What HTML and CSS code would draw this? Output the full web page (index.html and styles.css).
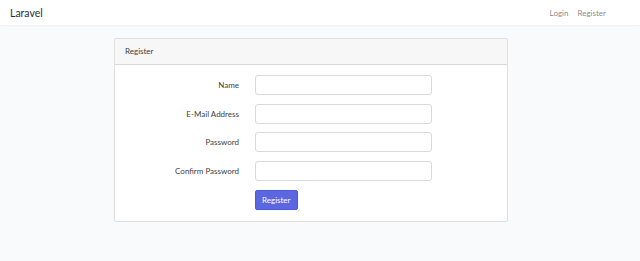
FILE: index.html
```html
<!DOCTYPE html>
<html>
<head>
    <meta charset="utf-8">
    <title>Register</title>
    <link rel="stylesheet" href="styles.css">
</head>
<body>
    <nav class="navbar">
        <a class="brand" href="#">Laravel</a>
        <div class="nav-links">
            <a href="#">Login</a>
            <a href="#">Register</a>
        </div>
    </nav>

    <main class="content">
        <div class="card">
            <div class="card-header">Register</div>
            <form class="card-body">
                <div class="form-row">
                    <label for="name">Name</label>
                    <input type="text" id="name">
                </div>
                <div class="form-row">
                    <label for="email">E-Mail Address</label>
                    <input type="email" id="email">
                </div>
                <div class="form-row">
                    <label for="password">Password</label>
                    <input type="password" id="password">
                </div>
                <div class="form-row">
                    <label for="password-confirm">Confirm Password</label>
                    <input type="password" id="password-confirm">
                </div>
                <div class="form-row">
                    <span></span>
                    <div class="actions"><button type="submit" class="btn">Register</button></div>
                </div>
            </form>
        </div>
    </main>
</body>
</html>
```

FILE: styles.css
```css
body {
    margin: 0;
    background: #f8fafc;
    font-family: Lato, "Noto Sans", sans-serif;
    color: #3a3f44;
}

.navbar {
    display: flex;
    align-items: center;
    justify-content: space-between;
    height: 25px;
    padding: 0 34px 0 10px;
    background: #fff;
    box-shadow: 0 1px 2px rgba(0, 0, 0, 0.05);
}

.brand {
    font-size: 10.5px;
    color: #2a2e33;
    text-decoration: none;
}

.nav-links {
    display: flex;
    gap: 9px;
}

.nav-links a {
    font-size: 8px;
    color: rgba(0, 0, 0, 0.5);
    text-decoration: none;
}

.content {
    padding-top: 13px;
}

.card {
    width: 392px;
    margin-left: 114px;
    background: #fff;
    border: 1px solid rgba(0, 0, 0, 0.125);
    border-radius: 2px;
}

.card-header {
    height: 25px;
    line-height: 25px;
    padding: 0 10px;
    font-size: 8px;
    background: rgba(0, 0, 0, 0.03);
    border-bottom: 1px solid rgba(0, 0, 0, 0.125);
}

.card-body {
    padding: 10px 0 11px;
}

.form-row {
    display: grid;
    grid-template-columns: 124px 177px;
    column-gap: 16px;
    align-items: center;
    margin-bottom: 8.7px;
}

.form-row:last-child {
    margin-bottom: 0;
}

.form-row label {
    text-align: right;
    font-size: 8px;
}

.form-row input {
    box-sizing: border-box;
    width: 177px;
    height: 20px;
    margin: 0;
    border: 1px solid #d6dade;
    border-radius: 3px;
    background: #fff;
}

.actions {
    display: flex;
}

.btn {
    height: 20px;
    padding: 0 6px;
    font-family: inherit;
    font-size: 8px;
    color: #fff;
    background: #5a67e0;
    border: 1px solid #4c5ad8;
    border-radius: 2px;
}
```
